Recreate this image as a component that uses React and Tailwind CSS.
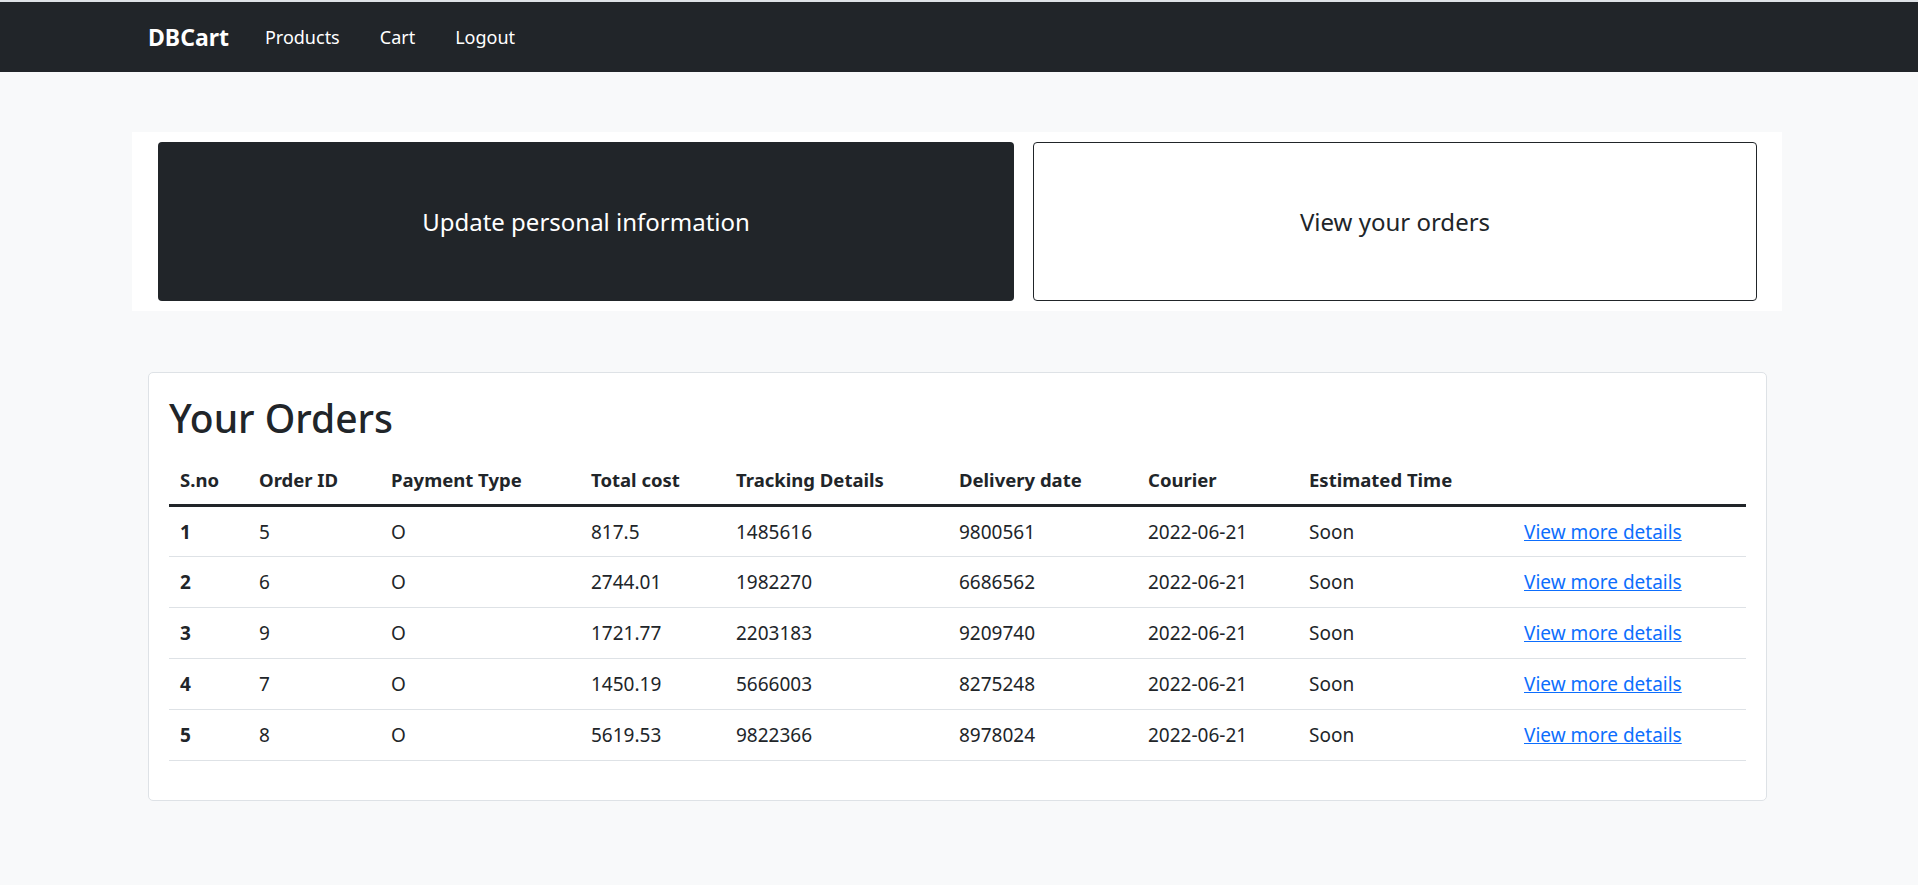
export default function App() {
  const rows = [
    [1, 5, 'O', '817.5', '1485616', '9800561'],
    [2, 6, 'O', '2744.01', '1982270', '6686562'],
    [3, 9, 'O', '1721.77', '2203183', '9209740'],
    [4, 7, 'O', '1450.19', '5666003', '8275248'],
    [5, 8, 'O', '5619.53', '9822366', '8978024'],
  ];
  const heads = ['S.no', 'Order ID', 'Payment Type', 'Total cost', 'Tracking Details', 'Delivery date', 'Courier', 'Estimated Time', ''];
  const widths = ['w-[79px]', 'w-[132px]', 'w-[200px]', 'w-[145px]', 'w-[223px]', 'w-[189px]', 'w-[161px]', 'w-[215px]', ''];

  return (
    <div className="min-h-[885px] bg-[#f8f9fa] text-[#212529] font-['Noto_Sans','Liberation_Sans',sans-serif] text-[19px] border-t-2 border-[#dee2e6]">
      {/* Navbar */}
      <nav className="h-[70px] bg-[#212529] flex items-center pl-[148px]">
        <span className="text-white font-bold text-[23px] mr-[36px]">DBCart</span>
        <div className="flex gap-[40px] text-white text-[18px]">
          <span>Products</span>
          <span>Cart</span>
          <span>Logout</span>
        </div>
      </nav>

      {/* Tiles */}
      <div className="ml-[132px] mt-[60px] w-[1650px] h-[179px] bg-white flex items-center pl-[26px] gap-[19px]">
        <div className="w-[856px] h-[159px] bg-[#212529] text-white rounded-[4px] flex items-center justify-center text-[24px]">
          Update personal information
        </div>
        <div className="w-[724px] h-[159px] bg-white border border-[#212529] rounded-[4px] flex items-center justify-center text-[24px]">
          View your orders
        </div>
      </div>

      {/* Orders */}
      <div className="ml-[148px] mt-[61px] w-[1619px] h-[429px] bg-white border border-[#dee2e6] rounded-[5px] px-[20px] pt-[22px]">
        <h1 className="text-[39px] font-medium leading-[1.2] mb-[14px]">Your Orders</h1>
        <table className="w-full border-collapse text-left">
          <thead>
            <tr className="border-b-[3px] border-[#212529]">
              {heads.map((h, i) => (
                <th key={i} className={`${widths[i]} px-[11px] h-[50px] font-bold text-[18.5px] align-middle`}>{h}</th>
              ))}
            </tr>
          </thead>
          <tbody>
            {rows.map((r) => (
              <tr key={r[0]} className="border-b border-[#dee2e6] h-[51px]">
                <td className="px-[11px] font-bold">{r[0]}</td>
                <td className="px-[11px]">{r[1]}</td>
                <td className="px-[11px]">{r[2]}</td>
                <td className="px-[11px]">{r[3]}</td>
                <td className="px-[11px]">{r[4]}</td>
                <td className="px-[11px]">{r[5]}</td>
                <td className="px-[11px]">2022-06-21</td>
                <td className="px-[11px]">Soon</td>
                <td className="px-[11px]">
                  <a href="#" className="text-[#0d6efd] underline">View more details</a>
                </td>
              </tr>
            ))}
          </tbody>
        </table>
      </div>
    </div>
  );
}
